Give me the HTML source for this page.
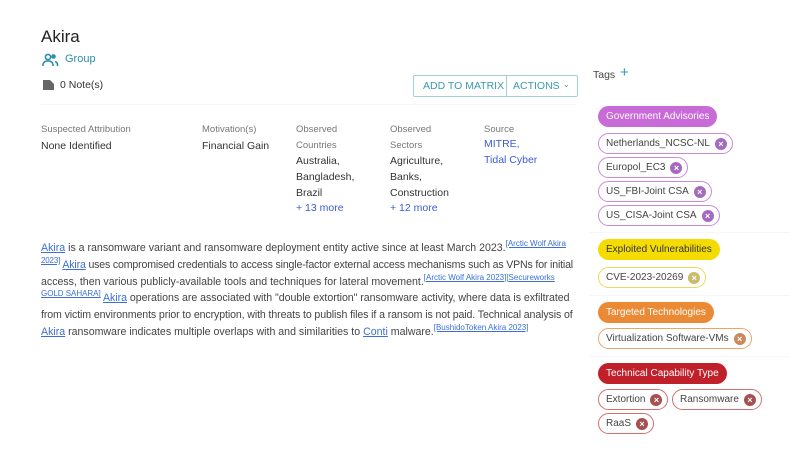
<!DOCTYPE html>
<html><head><meta charset="utf-8">
<style>
*{margin:0;padding:0;box-sizing:border-box}
body{width:800px;height:464px;background:#fff;font-family:"Liberation Sans",sans-serif;color:#333;position:relative;overflow:hidden}
.a{position:absolute}
.lbl{font-size:9.5px;color:#777;line-height:16px}
.val{font-size:10.5px;color:#333;line-height:16px}
.lnk{color:#3b5bdb}
.desc{position:absolute;left:41px;top:240px;width:560px;font-size:10.6px;line-height:16.8px;color:#444}
.desc div{white-space:nowrap;height:16.8px}
.desc a{color:#3b6fd6;text-decoration:underline}
sup{font-size:8px;color:#3b6fd6;text-decoration:underline;vertical-align:5px;line-height:0}
.hdr{position:absolute;left:598px;height:21px;border-radius:11px;color:#fff;font-size:10px;line-height:21px;padding:0 8px}
.chip{position:absolute;height:21px;border-radius:11px;border:1.3px solid;font-size:10px;padding:0 5px 0 7px;color:#444;background:#fff;white-space:nowrap;display:flex;align-items:center}
.x{display:inline-block;width:12px;height:12px;border-radius:50%;color:#fff;font-size:9px;line-height:12px;text-align:center;margin-left:5px;font-weight:bold}
.sep{position:absolute;left:590px;width:200px;height:1px;background:#f6f6f6}
</style></head><body>
<div class="a" style="left:41px;top:27px;font-size:17px;color:#222">Akira</div>
<svg class="a" style="left:42px;top:53px" width="17" height="14" viewBox="0 0 17 14"><circle cx="6" cy="4" r="2.6" fill="none" stroke="#2a8fa8" stroke-width="1.6"/><path d="M1 13v-1.5a4 4 0 0 1 4-3.5h2a4 4 0 0 1 4 3.5V13" fill="none" stroke="#2a8fa8" stroke-width="1.6"/><circle cx="11.5" cy="3.5" r="2.3" fill="#2a8fa8"/><path d="M13 8.5a3.5 3.5 0 0 1 2.5 3.5V13" fill="none" stroke="#2a8fa8" stroke-width="1.6"/></svg>
<div class="a" style="left:65px;top:53px;font-size:11px;color:#2a8fa8">Group</div>
<svg class="a" style="left:43px;top:80px" width="11" height="10"><path d="M0 0h7l4 4v6H0z" fill="#666"/></svg>
<div class="a" style="left:60px;top:79px;font-size:10.5px;color:#333">0 Note(s)</div>
<div class="a" style="left:413px;top:75px;width:165px;height:22px;border:1px solid #9fd0d8;border-radius:2px"></div>
<div class="a" style="left:506px;top:75px;width:1px;height:22px;background:#9fd0d8"></div>
<div class="a" style="left:423px;top:80px;font-size:10.5px;color:#3a9aae">ADD TO MATRIX</div>
<div class="a" style="left:513px;top:80px;font-size:10.5px;color:#3a9aae">ACTIONS</div>
<div class="a" style="left:563px;top:80px;font-size:8px;color:#3a9aae">&#8964;</div>
<div class="a" style="left:41px;top:104px;width:535px;height:1px;background:#f6f6f6"></div>

<div class="a lbl" style="left:41px;top:122px">Suspected Attribution</div>
<div class="a val" style="left:41px;top:138px">None Identified</div>
<div class="a lbl" style="left:202px;top:122px">Motivation(s)</div>
<div class="a val" style="left:202px;top:138px">Financial Gain</div>
<div class="a lbl" style="left:296px;top:122px">Observed<br>Countries</div>
<div class="a val" style="left:296px;top:154px;line-height:15.8px">Australia,<br>Bangladesh,<br>Brazil<br><span class="lnk">+ 13 more</span></div>
<div class="a lbl" style="left:390px;top:122px">Observed<br>Sectors</div>
<div class="a val" style="left:390px;top:154px;line-height:15.8px">Agriculture,<br>Banks,<br>Construction<br><span class="lnk">+ 12 more</span></div>
<div class="a lbl" style="left:484px;top:122px">Source</div>
<div class="a val lnk" style="left:484px;top:137px;line-height:15.5px">MITRE,<br>Tidal Cyber</div>

<div class="desc">
<div><a>Akira</a> is a ransomware variant and ransomware deployment entity active since at least March 2023.<sup>[Arctic Wolf Akira</sup></div>
<div style="letter-spacing:-0.17px"><sup>2023]</sup> <a>Akira</a> uses compromised credentials to access single-factor external access mechanisms such as VPNs for initial</div>
<div>access, then various publicly-available tools and techniques for lateral movement.<sup>[Arctic Wolf Akira 2023][Secureworks</sup></div>
<div style="letter-spacing:-0.03px"><sup>GOLD SAHARA]</sup> <a>Akira</a> operations are associated with "double extortion" ransomware activity, where data is exfiltrated</div>
<div style="letter-spacing:-0.11px">from victim environments prior to encryption, with threats to publish files if a ransom is not paid. Technical analysis of</div>
<div><a>Akira</a> ransomware indicates multiple overlaps with and similarities to <a>Conti</a> malware.<sup>[BushidoToken Akira 2023]</sup></div>
</div>

<div class="a" style="left:593px;top:69px;font-size:10.5px;color:#444">Tags</div>
<div class="a" style="left:620px;top:64px;font-size:15px;color:#2a9fb0">+</div>

<div class="hdr" style="top:106px;background:#c86ad8">Government Advisories</div>
<div class="chip" style="left:598px;top:133px;border-color:#c98ad8">Netherlands_NCSC-NL<span class="x" style="background:#a56ac0">×</span></div>
<div class="chip" style="left:598px;top:157px;border-color:#c98ad8">Europol_EC3<span class="x" style="background:#a56ac0">×</span></div>
<div class="chip" style="left:598px;top:181px;border-color:#c98ad8">US_FBI-Joint CSA<span class="x" style="background:#a56ac0">×</span></div>
<div class="chip" style="left:598px;top:205px;border-color:#c98ad8">US_CISA-Joint CSA<span class="x" style="background:#a56ac0">×</span></div>
<div class="sep" style="top:232px"></div>
<div class="hdr" style="top:239px;background:#f5dc00;color:#333">Exploited Vulnerabilities</div>
<div class="chip" style="left:598px;top:267px;border-color:#ecd860">CVE-2023-20269<span class="x" style="background:#c9bd6a">×</span></div>
<div class="sep" style="top:295px"></div>
<div class="hdr" style="top:302px;background:#ea8a35">Targeted Technologies</div>
<div class="chip" style="left:598px;top:328px;border-color:#e9a56a">Virtualization Software-VMs<span class="x" style="background:#c98a5e">×</span></div>
<div class="sep" style="top:356px"></div>
<div class="hdr" style="top:363px;background:#c0202a">Technical Capability Type</div>
<div class="chip" style="left:598px;top:389px;border-color:#d07070">Extortion<span class="x" style="background:#a85050">×</span></div>
<div class="chip" style="left:672px;top:389px;border-color:#d07070">Ransomware<span class="x" style="background:#a85050">×</span></div>
<div class="chip" style="left:598px;top:413px;border-color:#d07070">RaaS<span class="x" style="background:#a85050">×</span></div>
</body></html>
